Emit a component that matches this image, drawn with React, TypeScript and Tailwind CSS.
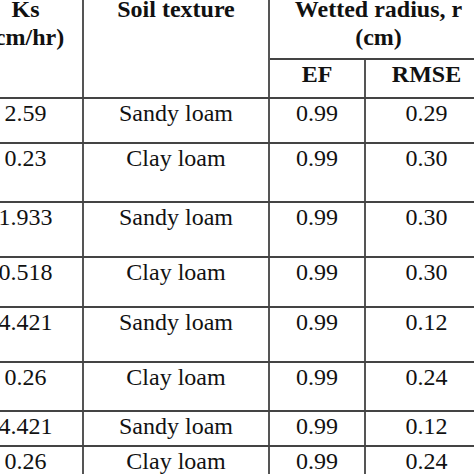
const rows = [
  { ks: '2.59', soil: 'Sandy loam', ef: '0.99', rmse: '0.29', h: 'h-[45px]' },
  { ks: '0.23', soil: 'Clay loam', ef: '0.99', rmse: '0.30', h: 'h-[59px]' },
  { ks: '1.933', soil: 'Sandy loam', ef: '0.99', rmse: '0.30', h: 'h-[55px]' },
  { ks: '0.518', soil: 'Clay loam', ef: '0.99', rmse: '0.30', h: 'h-[50px]' },
  { ks: '4.421', soil: 'Sandy loam', ef: '0.99', rmse: '0.12', h: 'h-[55px]' },
  { ks: '0.26', soil: 'Clay loam', ef: '0.99', rmse: '0.24', h: 'h-[49px]' },
  { ks: '4.421', soil: 'Sandy loam', ef: '0.99', rmse: '0.12', h: 'h-[35px]' },
  { ks: '0.26', soil: 'Clay loam', ef: '0.99', rmse: '0.24', h: 'h-[45px]' },
];

export default function App() {
  return (
    <div className="w-[474px] h-[474px] overflow-hidden bg-white">
      {/* table is cropped: starts left of and above the viewport */}
      <div className="w-[518px] ml-[-31px] mt-[-5px] text-[24px] leading-[28px] text-[#111] font-['Liberation_Serif',serif]">
        <div className="flex h-[104px] border-b-2 border-[#444] font-bold">
          <div className="w-[115px] shrink-0 border-r-2 border-[#555] text-center">
            Ks
            <br />
            (cm/hr)
          </div>
          <div className="w-[186px] shrink-0 border-r-2 border-[#555] text-center">Soil texture</div>
          <div className="flex-1 flex flex-col">
            <div className="h-[65px] border-b-2 border-[#444] text-center">
              Wetted radius, r
              <br />
              (cm)
            </div>
            <div className="flex flex-1">
              <div className="w-[96px] shrink-0 border-r-2 border-[#555] text-center">EF</div>
              <div className="flex-1 text-center">RMSE</div>
            </div>
          </div>
        </div>

        {rows.map((r, i) => (
          <div key={i} className={`flex border-b-2 border-[#444] ${r.h}`}>
            <div className="w-[115px] shrink-0 border-r-2 border-[#555] text-center">{r.ks}</div>
            <div className="w-[186px] shrink-0 border-r-2 border-[#555] text-center">{r.soil}</div>
            <div className="w-[96px] shrink-0 border-r-2 border-[#555] text-center">{r.ef}</div>
            <div className="flex-1 text-center">{r.rmse}</div>
          </div>
        ))}
      </div>
    </div>
  );
}
